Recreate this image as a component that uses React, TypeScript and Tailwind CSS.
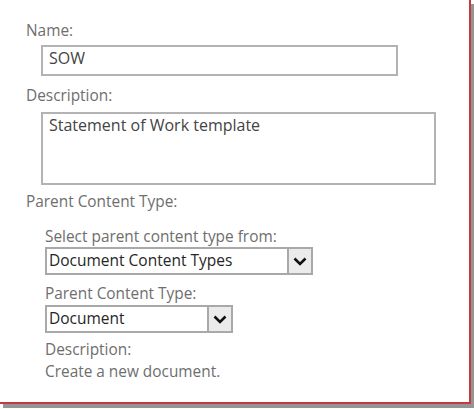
import React from "react";

const Chevron = () => (
  <svg width="14" height="9" viewBox="0 0 14 9" className="block">
    <polyline points="1.5,1.5 7,7 12.5,1.5" fill="none" stroke="#111" strokeWidth="2.6" />
  </svg>
);

const Select = ({ value, width }: { value: string; width: string }) => (
  <div className={`flex h-[28px] ${width} border-2 border-[#a9a9a9] bg-white`}>
    <div className="flex-1 pl-[2px] pt-[1px] leading-[20px] text-[#262626] text-[15.5px]">{value}</div>
    <div className="flex w-[24px] items-center justify-center border-l-2 border-[#a9a9a9] bg-[#ebebeb]">
      <Chevron />
    </div>
  </div>
);

const App = () => {
  return (
    <div className="w-[474px] h-[409px] bg-white overflow-hidden" style={{ fontFamily: '"Open Sans", "Noto Sans", sans-serif' }}>
      <div className="w-[471px] h-[404px] bg-white border-r-2 border-b-2 border-[#c23b40] shadow-[3px_4px_0_#959595] pt-[21px] pl-[26px] text-[15.4px] text-[#6e6e6e]">
        <div className="leading-[20px] h-[20px]">Name:</div>
        <div className="mt-[4px] ml-[15px] w-[357px] h-[31px] border-2 border-[#b3b3b3] pl-[6px] pt-[1px] leading-[20px] text-[#444] text-[16px]">
          SOW
        </div>
        <div className="mt-[10px] leading-[20px] h-[20px]">Description:</div>
        <div className="mt-[6px] ml-[15px] w-[395px] h-[73px] border-2 border-[#b3b3b3] pl-[6px] pt-[1px] leading-[20px] text-[#444] text-[16px]">
          Statement of Work template
        </div>
        <div className="mt-[7px] leading-[20px] h-[20px]">Parent Content Type:</div>
        <div className="pl-[19px]">
          <div className="mt-[15px] leading-[20px] h-[20px]">Select parent content type from:</div>
          <Select value="Document Content Types" width="w-[268px]" />
          <div className="mt-[9px] leading-[20px] h-[20px]">Parent Content Type:</div>
          <div className="mt-[1px]">
            <Select value="Document" width="w-[188px]" />
          </div>
          <div className="mt-[7px] leading-[20px] h-[20px]">Description:</div>
          <div className="mt-[2px] leading-[20px] h-[20px]">Create a new document.</div>
        </div>
      </div>
    </div>
  );
};

export default App;
